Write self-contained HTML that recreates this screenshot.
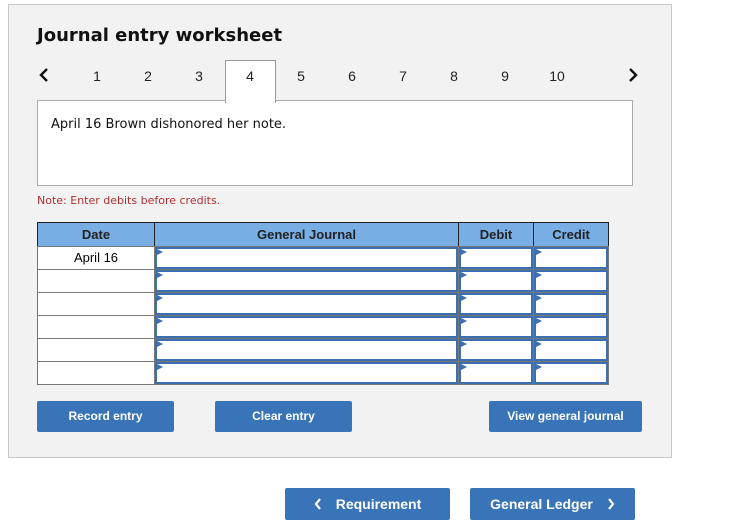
<!DOCTYPE html>
<html><head><style>
body{margin:0;width:732px;height:522px;background:#fff;position:relative;font-family:"Liberation Sans",Arial,sans-serif;overflow:hidden}
.a{position:absolute}
.panel{left:8px;top:4px;width:662px;height:452px;background:#f2f2f2;border:1px solid #c8c8c8}
.title{left:37px;top:25px;font-family:"DejaVu Sans",Verdana,sans-serif;font-weight:bold;font-size:18px;color:#111}
.tab{top:68px;font-size:14px;color:#222;width:30px;text-align:center}
.active{left:225px;top:60px;width:49px;height:42px;background:#fff;border:1px solid #999;border-bottom:none;z-index:2}
.box{left:37px;top:100px;width:594px;height:84px;background:#fff;border:1px solid #aaa}
.v{font-family:"DejaVu Sans",Verdana,sans-serif}
.btn{background:#3a74b8;color:#fff;font-weight:bold;font-size:13px;text-align:center;border-radius:2px}
.hd{background:#78aee4;border:1px solid #222;box-sizing:border-box;height:25px;font-size:13px;font-weight:bold;color:#222;text-align:center;line-height:24px}
.dc{background:#fff;border:1px solid #777;box-sizing:border-box;height:24px;font-size:13px;text-align:center;line-height:22px}
.in{background:#fff;border:2px solid #3b6fb0;box-sizing:border-box;height:22px}
.in:before{content:"";position:absolute;left:0;top:0;border-left:6px solid #3b6fb0;border-top:3px solid transparent;border-bottom:3px solid transparent}
</style></head><body>
<div class="a panel"></div>
<div class="a title">Journal entry worksheet</div>
<svg class="a" style="left:38px;top:67px" width="12" height="16"><path d="M9 2 L3 8 L9 14" stroke="#111" stroke-width="2.4" fill="none"/></svg>
<svg class="a" style="left:627px;top:67px" width="12" height="16"><path d="M3 2 L9 8 L3 14" stroke="#111" stroke-width="2.4" fill="none"/></svg>
<div class="a active"></div>
<div class="a tab" style="left:82px">1</div>
<div class="a tab" style="left:133px">2</div>
<div class="a tab" style="left:184px">3</div>
<div class="a tab" style="left:235px;z-index:3">4</div>
<div class="a tab" style="left:286px">5</div>
<div class="a tab" style="left:337px">6</div>
<div class="a tab" style="left:388px">7</div>
<div class="a tab" style="left:439px">8</div>
<div class="a tab" style="left:490px">9</div>
<div class="a tab" style="left:542px">10</div>
<div class="a box"></div>
<div class="a v" style="left:51px;top:117px;font-size:13px;color:#111">April 16 Brown dishonored her note.</div>
<div class="a v" style="left:37px;top:194px;font-size:11px;color:#b03030">Note: Enter debits before credits.</div>

<div class="a hd" style="left:37px;top:222px;width:118px">Date</div>
<div class="a hd" style="left:154px;top:222px;width:305px">General Journal</div>
<div class="a hd" style="left:458px;top:222px;width:76px">Debit</div>
<div class="a hd" style="left:533px;top:222px;width:76px">Credit</div>
<div id="rows"></div>
<script>
var h='';for(var i=0;i<6;i++){var y=246+i*23;
h+='<div class="a dc" style="left:37px;top:'+y+'px;width:118px">'+(i==0?'April 16':'')+'</div>';
h+='<div class="a" style="left:154px;top:'+y+'px;width:455px;height:24px;background:#777"></div>';
h+='<div class="a in" style="left:155px;top:'+(y+1)+'px;width:303px"></div>';
h+='<div class="a in" style="left:459px;top:'+(y+1)+'px;width:74px"></div>';
h+='<div class="a in" style="left:534px;top:'+(y+1)+'px;width:74px"></div>';}
document.getElementById('rows').innerHTML=h;
</script>
<div class="a btn" style="left:37px;top:401px;width:137px;height:31px;line-height:31px;font-size:12px">Record entry</div>
<div class="a btn" style="left:215px;top:401px;width:137px;height:31px;line-height:31px;font-size:12px">Clear entry</div>
<div class="a btn" style="left:489px;top:401px;width:153px;height:31px;line-height:31px;font-size:12px">View general journal</div>
<div class="a btn" style="left:285px;top:488px;width:165px;height:32px;line-height:32px;font-size:14px"><svg width="8" height="12" style="margin-right:14px;vertical-align:-1px"><path d="M6 1 L2 6 L6 11" stroke="#fff" stroke-width="2.2" fill="none"/></svg>Requirement</div>
<div class="a btn" style="left:470px;top:488px;width:165px;height:32px;line-height:32px;font-size:14px">General Ledger<svg width="8" height="12" style="margin-left:14px;vertical-align:-1px"><path d="M2 1 L6 6 L2 11" stroke="#fff" stroke-width="2.2" fill="none"/></svg></div>
</body></html>
